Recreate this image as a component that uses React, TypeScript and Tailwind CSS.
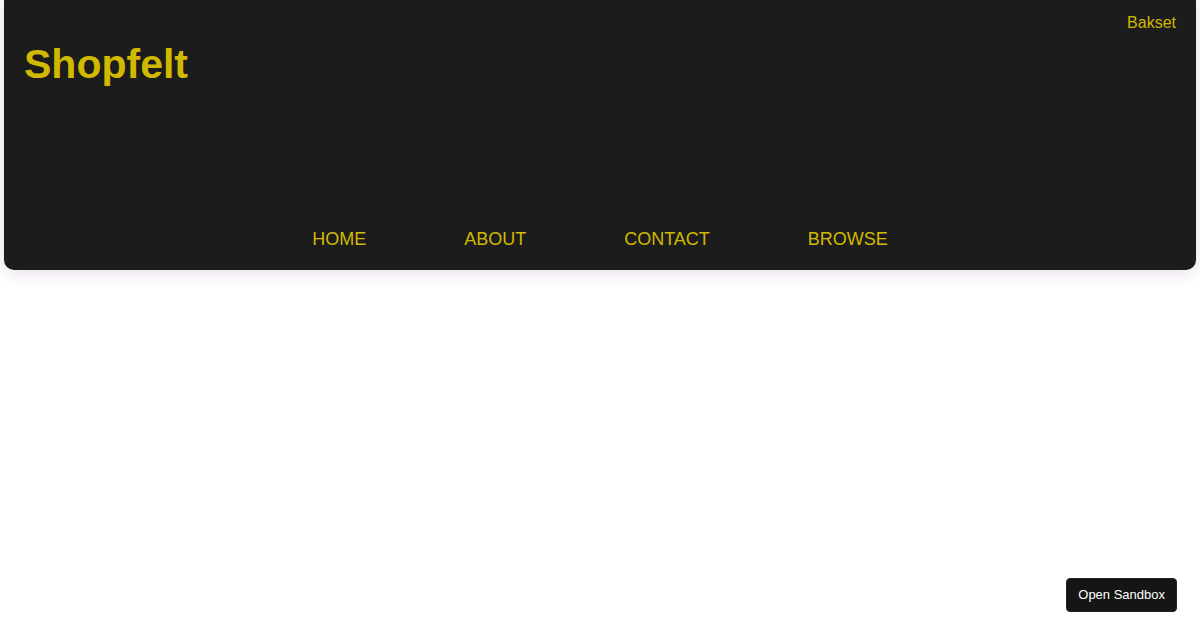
import React from "react";

const links = ["Home", "About", "Contact", "Browse"];

export default function App() {
  return (
    <div className="min-h-screen bg-white font-['Liberation_Sans',Arial,sans-serif]">
      <header className="mx-1 rounded-b-[10px] bg-[#1c1c1c] px-5 pb-5 text-[#d0b900] shadow-[0_2px_18px_rgba(90,10,90,0.15)]">
        <div className="flex items-start justify-between">
          <h1 className="pt-10 text-[41px] leading-[48px] font-bold">Shopfelt</h1>
          <a href="#basket" className="pt-3 text-base leading-[22px]">
            Bakset
          </a>
        </div>
        <nav className="mt-[140px] flex flex-wrap justify-center gap-x-[98px]">
          {links.map((link) => (
            <a key={link} href={`#${link}`} className="text-lg leading-[22px] uppercase">
              {link}
            </a>
          ))}
        </nav>
      </header>
      <button
        type="button"
        className="fixed right-[23px] bottom-[18px] rounded border border-[#242424] bg-[#151515] px-[11px] py-2 text-[13px] leading-4 text-white"
      >
        Open Sandbox
      </button>
    </div>
  );
}
